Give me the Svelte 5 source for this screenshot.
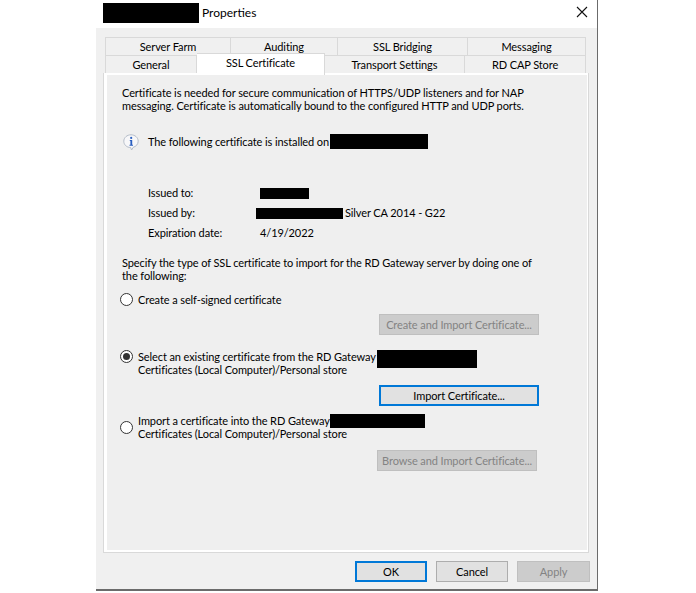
<script>
  const backTabs = [
    { label: 'Server Farm', width: 126 },
    { label: 'Auditing', width: 107 },
    { label: 'SSL Bridging', width: 130 },
    { label: 'Messaging', width: 118 }
  ];
  const frontTabs = [
    { label: 'General', width: 92 },
    { label: 'SSL Certificate', width: 128, selected: true },
    { label: 'Transport Settings', width: 140 },
    { label: 'RD CAP Store', width: 121 }
  ];
</script>

<div class="window">
  <header class="title">
    <span class="black title-mask"></span>
    <span class="title-text">Properties</span>
    <svg class="close" width="12" height="12" viewBox="0 0 12 12" aria-hidden="true">
      <path d="M1 1 L11 11 M11 1 L1 11" stroke="#111" stroke-width="1.1" fill="none" />
    </svg>
  </header>

  <div class="body">
    <div class="tabrow back">
      {#each backTabs as t}
        <div class="tab" style="width:{t.width}px">{t.label}</div>
      {/each}
    </div>
    <div class="tabrow front">
      {#each frontTabs as t}
        <div class="tab" class:selected={t.selected} style="width:{t.width}px">{t.label}</div>
      {/each}
    </div>

    <section class="panel">
      <div class="fill">
        <p class="intro">Certificate is needed for secure communication of HTTPS/UDP listeners and for NAP<br />messaging. Certificate is automatically bound to the configured HTTP and UDP ports.</p>

        <div class="info">
          <svg class="info-icon" width="16" height="17" viewBox="0 0 16 17" aria-hidden="true">
            <path d="M8 .8 C12 .8 15.2 3.6 15.2 7.2 C15.2 10.2 13 12.6 10.2 13.3 L8.6 16 L7.6 13.5 C3.6 13.5 .8 10.7 .8 7.2 C.8 3.6 4 .8 8 .8 Z" fill="#f7f7f9" stroke="#b4bcc8" stroke-width="1" />
            <circle cx="8.2" cy="3.9" r="1.1" fill="#2a5fc0" />
            <path d="M6.8 6 H9.2 V10.8 H10 V11.7 H6.5 V10.8 H7.4 V6.9 H6.8 Z" fill="#2a5fc0" />
          </svg>
          <span class="info-text">The following certificate is installed on</span>
          <span class="black info-mask"></span>
        </div>

        <div class="details">
          <span>Issued to:</span>
          <span><span class="black to-mask"></span></span>
          <span>Issued by:</span>
          <span class="issuer"><span class="black by-mask"></span><span>Silver CA 2014 - G22</span></span>
          <span>Expiration date:</span>
          <span>4/19/2022</span>
        </div>

        <p class="specify">Specify the type of SSL certificate to import for the RD Gateway server by doing one of<br />the following:</p>

        <div class="option first">
          <span class="radio"></span>
          <span class="option-text">Create a self-signed certificate</span>
        </div>
        <button class="btn wide disabled b1" disabled>Create and Import Certificate...</button>

        <div class="option second">
          <span class="radio checked"></span>
          <span class="option-text">Select an existing certificate from the RD Gateway<span class="black opt2-mask"></span><br />Certificates (Local Computer)/Personal store</span>
        </div>
        <button class="btn wide default b2">Import Certificate...</button>

        <div class="option third">
          <span class="radio"></span>
          <span class="option-text">Import a certificate into the RD Gateway<span class="black opt3-mask"></span><br />Certificates (Local Computer)/Personal store</span>
        </div>
        <button class="btn wide disabled b3" disabled>Browse and Import Certificate...</button>
      </div>
    </section>

    <footer class="footer">
      <button class="btn small default">OK</button>
      <button class="btn small">Cancel</button>
      <button class="btn small apply disabled" disabled>Apply</button>
    </footer>
  </div>
</div>

<style>
  :global(body) {
    margin: 0;
    background: #fff;
  }
  .window {
    box-sizing: border-box;
    width: 502px;
    height: 591px;
    margin-left: 96px;
    display: flex;
    flex-direction: column;
    border-right: 1px solid #6b6b6b;
    border-bottom: 2px solid #6b6b6b;
    font-family: Lato, "Liberation Sans", sans-serif;
    font-size: 11px;
    letter-spacing: -0.1px;
    color: #000;
  }
  .title {
    height: 28px;
    flex: none;
    display: flex;
    align-items: center;
    padding-left: 7px;
    background: #fff;
  }
  .black {
    display: inline-block;
    background: #000;
  }
  .title-mask {
    width: 96px;
    height: 20px;
    margin-top: -3px;
  }
  .title-text {
    margin-left: 3px;
    margin-top: -4px;
    font-size: 12px;
    letter-spacing: 0;
  }
  .close {
    margin-left: auto;
    margin-right: 9px;
    margin-top: -4px;
  }
  .body {
    flex: 1;
    background: #f0f0f0;
    padding-top: 9px;
  }
  .tabrow {
    display: flex;
    margin-left: 9px;
    height: 18px;
  }
  .tab {
    box-sizing: border-box;
    flex: none;
    height: 18px;
    line-height: 18px;
    text-align: center;
    border: 1px solid #d9d9d9;
    border-bottom: 0;
    border-left-width: 0;
    background: #f0f0f0;
    white-space: nowrap;
  }
  .tab:first-child {
    border-left-width: 1px;
  }
  .front .tab {
    line-height: 17px;
  }
  .front .selected {
    position: relative;
    z-index: 1;
    height: 22px;
    margin-top: -2px;
    line-height: 17px;
    background: #fff;
    border-left-width: 0;
  }
  .panel {
    box-sizing: border-box;
    width: 486px;
    height: 480px;
    margin-left: 7px;
    border: 1px solid #d9d9d9;
    border-top: 0;
    background: #fff;
    padding: 2px 1px 2px 3px;
  }
  .fill {
    height: 100%;
    box-sizing: border-box;
    background: #efefef;
    padding-left: 15px;
    padding-top: 11px;
  }
  p {
    margin: 0;
    line-height: 13px;
    white-space: nowrap;
  }
  .info {
    display: flex;
    align-items: center;
    height: 16px;
    margin-top: 21px;
    margin-left: 1px;
    white-space: nowrap;
  }
  .info-icon {
    margin-top: 3px;
  }
  .info-text {
    margin-left: 9px;
  }
  .info-mask {
    width: 98px;
    height: 15px;
    margin-left: 1px;
  }
  .details {
    display: grid;
    grid-template-columns: 112px 1fr;
    grid-auto-rows: 20px;
    align-items: center;
    margin-top: 33px;
    margin-left: 26px;
  }
  .to-mask {
    width: 49px;
    height: 11px;
    display: block;
    margin-top: 2px;
  }
  .issuer {
    display: flex;
    align-items: center;
    margin-left: -4px;
  }
  .by-mask {
    width: 87px;
    height: 11px;
    margin-right: 2px;
    margin-top: 2px;
  }
  .specify {
    margin-top: 14px;
  }
  .option {
    display: flex;
    line-height: 13px;
    white-space: nowrap;
    margin-left: -2px;
  }
  .first {
    margin-top: 11px;
    align-items: center;
  }
  .second {
    margin-top: 15px;
    align-items: flex-start;
  }
  .third {
    margin-top: 8px;
    align-items: center;
  }
  .radio {
    box-sizing: border-box;
    flex: none;
    width: 13px;
    height: 13px;
    border-radius: 50%;
    border: 1px solid #333;
    background: #fff;
    margin-right: 5px;
    display: flex;
    align-items: center;
    justify-content: center;
  }
  .first .radio {
    margin-top: -1px;
  }
  .checked::after {
    content: "";
    width: 7px;
    height: 7px;
    border-radius: 50%;
    background: #333;
  }
  .opt2-mask {
    width: 100px;
    height: 18px;
    margin: -3px 0 -5px 1px;
    vertical-align: middle;
  }
  .opt3-mask {
    width: 95px;
    height: 14px;
    margin: -3px 0 -1px 0;
    vertical-align: middle;
  }
  .btn {
    display: block;
    box-sizing: border-box;
    height: 21px;
    padding: 0;
    border: 1px solid #adadad;
    background: #e1e1e1;
    font: inherit;
    letter-spacing: inherit;
    color: #000;
    white-space: nowrap;
  }
  .wide {
    width: 160px;
    margin-left: 257px;
  }
  .small {
    width: 72px;
  }
  .apply {
    width: 73px;
  }
  .default {
    border: 2px solid #0078d7;
  }
  .disabled {
    background: #ccc;
    border-color: #bfbfbf;
    color: #838383;
  }
  .b1 {
    margin-top: 8px;
  }
  .b2 {
    margin-top: 9px;
  }
  .b3 {
    margin-top: 10px;
    margin-left: 255px;
  }
  .footer {
    display: flex;
    justify-content: flex-end;
    gap: 9px;
    margin-top: 8px;
    padding-right: 7px;
  }
</style>
